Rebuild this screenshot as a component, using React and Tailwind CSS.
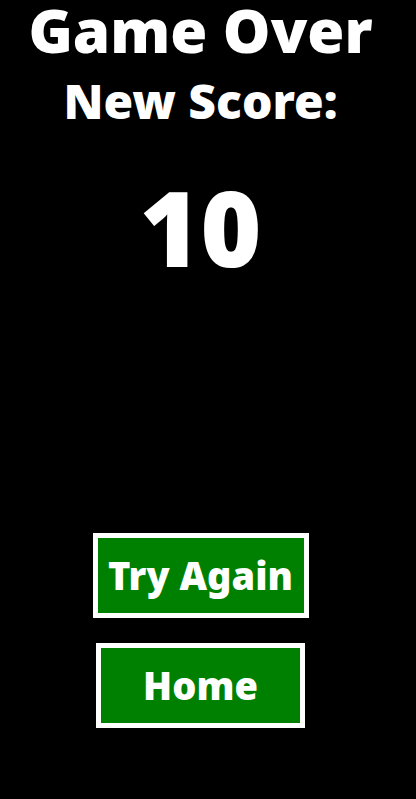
import React from 'react';

const font = { fontFamily: '"Noto Sans", "Open Sans", sans-serif' };

export default function App() {
  return (
    <div className="w-full min-h-screen bg-black">
      <div className="w-[401px] h-[799px] text-white flex flex-col items-center overflow-hidden" style={font}>
        <h1 className="text-[60px] font-black leading-[60px]">Game Over</h1>
        <h2 className="text-[48px] font-black leading-[52px] mt-[15px]">New Score:</h2>
        <div className="text-[104px] font-black leading-[120px] mt-[40px]">10</div>

        <div className="mt-[246px] flex flex-col items-center gap-[25px]">
          <button className="w-[216px] h-[85px] border-[5px] border-white bg-[#008000] text-white text-[38px] font-black">
            Try Again
          </button>
          <button className="w-[209px] h-[85px] border-[5px] border-white bg-[#008000] text-white text-[38px] font-black">
            Home
          </button>
        </div>
      </div>
    </div>
  );
}
